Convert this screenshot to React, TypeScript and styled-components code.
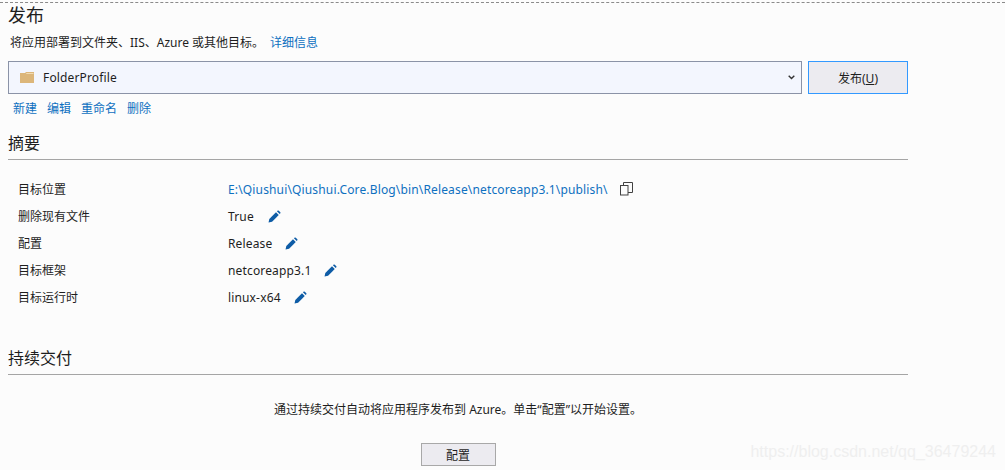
import React from "react";
import styled, { createGlobalStyle } from "styled-components";

const Global = createGlobalStyle`
  html, body { margin: 0; padding: 0; background: #fcfcfc; }
  body { font-family: "Noto Sans", "Noto Sans CJK SC", sans-serif; font-size: 12px; color: #1e1e1e; }
  * { box-sizing: border-box; }
`;

const Page = styled.div`
  position: relative;
  width: 1005px;
  height: 470px;
  overflow: hidden;
  border-top: 1px dashed #8a8a8a;
  margin-top: 2px;
  padding: 0 97px 0 8px;
  display: flex;
  flex-direction: column;
`;

const Title = styled.h1`
  margin: 0;
  height: 25px;
  font-size: 18px;
  line-height: 25px;
  font-weight: 400;
`;

const Subtitle = styled.p`
  margin: 6px 0 0 2px;
  height: 18px;
  line-height: 18px;
  display: flex;
  gap: 6px;
`;

const Link = styled.a`
  color: #0e70c0;
  text-decoration: none;
  cursor: pointer;
`;

const ProfileRow = styled.div`
  display: flex;
  gap: 6px;
  margin-top: 9px;
  height: 33px;
`;

const Combo = styled.div`
  flex: 1;
  display: flex;
  align-items: center;
  padding: 0 6px 0 11px;
  background: #f3f6fe;
  border: 1px solid #8b93a7;
`;

const ComboText = styled.span`
  flex: 1;
  margin-left: 9px;
  letter-spacing: 0.15px;
`;

const Button = styled.button<{ $focused?: boolean; $w: number; $h: number; $mt?: number }>`
  width: ${(p) => p.$w}px;
  height: ${(p) => p.$h}px;
  margin-top: ${(p) => p.$mt ?? 0}px;
  padding: 0;
  font: inherit;
  color: inherit;
  background: #ecebf0;
  border: 1px solid ${(p) => (p.$focused ? "#3399ff" : "#a8a8a8")};
  u { text-underline-offset: 1px; }
`;

const Links = styled.div`
  display: flex;
  gap: 10px;
  margin: 6px 0 0 5px;
  height: 18px;
  line-height: 18px;
`;

const SectionTitle = styled.h2<{ $top: number }>`
  margin: ${(p) => p.$top}px 0 0;
  height: 28px;
  font-size: 16px;
  line-height: 22px;
  font-weight: 400;
  border-bottom: 1px solid #a5a5a5;
`;

const Rows = styled.div`
  margin: 15px 0 0 10px;
  display: grid;
  grid-template-columns: 210px 1fr;
  grid-auto-rows: 27px;
  align-items: center;
`;

const Value = styled.div`
  display: flex;
  align-items: center;
  padding-top: 1px;
  letter-spacing: 0.15px;
`;

const IconWrap = styled.span<{ $ml: number }>`
  display: inline-flex;
  margin-left: ${(p) => p.$ml}px;
`;

const Center = styled.div`
  display: flex;
  flex-direction: column;
  align-items: center;
`;

const Notice = styled.p`
  margin: 26px 0 0;
  height: 18px;
  line-height: 18px;
`;

const Watermark = styled.div`
  position: absolute;
  right: 9px;
  top: 440px;
  font-family: "Liberation Sans", sans-serif;
  font-size: 16px;
  line-height: 18px;
  color: #efefef;
`;

const Pencil = () => (
  <svg width="13" height="13" viewBox="0 0 14 14" aria-hidden="true">
    <path d="M0.6 13.4 L1.4 9.6 L8.6 2.4 L11.6 5.4 L4.4 12.6 Z" fill="#0e5ca6" />
    <path d="M9.6 1.4 L10.6 0.6 Q11.1 0.3 11.6 0.7 L13.3 2.4 Q13.7 2.9 13.3 3.4 L12.6 4.4 Z" fill="#0e5ca6" />
  </svg>
);

const CopyIcon = () => (
  <svg width="13" height="14" viewBox="0 0 13 14" fill="none" stroke="#424242" strokeWidth="1" aria-hidden="true">
    <rect x="0.5" y="3.5" width="7.5" height="9.5" />
    <path d="M3.5 3.5 V0.5 H12.5 V10.5 H8" />
  </svg>
);

const FolderIcon = () => (
  <svg width="14" height="12" viewBox="0 0 14 12" aria-hidden="true">
    <path d="M0 1 H5 L6 0 H14 V11 H0 Z" fill="#dcb67a" />
    <path d="M6.5 1 H13.5 V2 H6 Z" fill="#f2dcb3" />
  </svg>
);

const Chevron = () => (
  <svg width="7" height="5" viewBox="0 0 7 5" fill="none" stroke="#333" strokeWidth="1.4" aria-hidden="true">
    <path d="M0.7 0.8 L3.5 3.6 L6.3 0.8" />
  </svg>
);

const rows = [
  { label: "删除现有文件", value: "True", gap: 14 },
  { label: "配置", value: "Release", gap: 13 },
  { label: "目标框架", value: "netcoreapp3.1", gap: 13 },
  { label: "目标运行时", value: "linux-x64", gap: 13 },
];

export default function App() {
  return (
    <>
      <Global />
      <Page>
        <Title>发布</Title>
        <Subtitle>
          <span>将应用部署到文件夹、IIS、Azure 或其他目标。</span>
          <Link>详细信息</Link>
        </Subtitle>
        <ProfileRow>
          <Combo>
            <FolderIcon />
            <ComboText>FolderProfile</ComboText>
            <Chevron />
          </Combo>
          <Button $focused $w={100} $h={33}>
            发布(<u>U</u>)
          </Button>
        </ProfileRow>
        <Links>
          <Link>新建</Link>
          <Link>编辑</Link>
          <Link>重命名</Link>
          <Link>删除</Link>
        </Links>
        <SectionTitle $top={14}>摘要</SectionTitle>
        <Rows>
          <span>目标位置</span>
          <Value>
            <Link>E:\Qiushui\Qiushui.Core.Blog\bin\Release\netcoreapp3.1\publish\</Link>
            <IconWrap $ml={12}>
              <CopyIcon />
            </IconWrap>
          </Value>
          {rows.map((r) => (
            <React.Fragment key={r.label}>
              <span>{r.label}</span>
              <Value>
                <span>{r.value}</span>
                <IconWrap $ml={r.gap}>
                  <Pencil />
                </IconWrap>
              </Value>
            </React.Fragment>
          ))}
        </Rows>
        <SectionTitle $top={37}>持续交付</SectionTitle>
        <Center>
          <Notice>通过持续交付自动将应用程序发布到 Azure。单击“配置”以开始设置。</Notice>
          <Button $w={75} $h={23} $mt={24}>
            配置
          </Button>
        </Center>
        <Watermark>https://blog.csdn.net/qq_36479244</Watermark>
      </Page>
    </>
  );
}
